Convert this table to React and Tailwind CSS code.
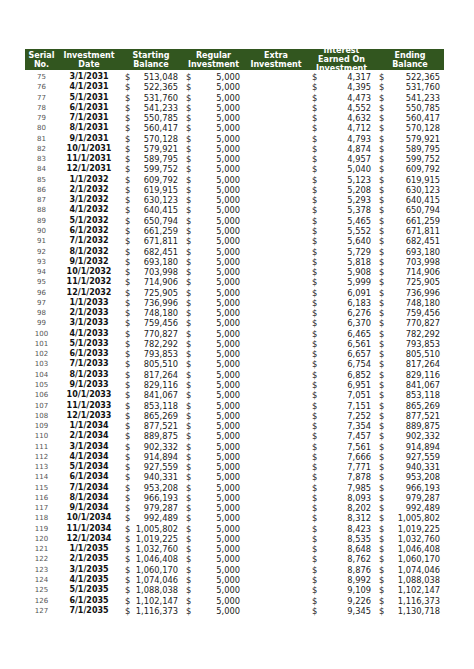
import React from "react";

const raw = `75|3/1/2031|513,048|4,317|522,365
76|4/1/2031|522,365|4,395|531,760
77|5/1/2031|531,760|4,473|541,233
78|6/1/2031|541,233|4,552|550,785
79|7/1/2031|550,785|4,632|560,417
80|8/1/2031|560,417|4,712|570,128
81|9/1/2031|570,128|4,793|579,921
82|10/1/2031|579,921|4,874|589,795
83|11/1/2031|589,795|4,957|599,752
84|12/1/2031|599,752|5,040|609,792
85|1/1/2032|609,792|5,123|619,915
86|2/1/2032|619,915|5,208|630,123
87|3/1/2032|630,123|5,293|640,415
88|4/1/2032|640,415|5,378|650,794
89|5/1/2032|650,794|5,465|661,259
90|6/1/2032|661,259|5,552|671,811
91|7/1/2032|671,811|5,640|682,451
92|8/1/2032|682,451|5,729|693,180
93|9/1/2032|693,180|5,818|703,998
94|10/1/2032|703,998|5,908|714,906
95|11/1/2032|714,906|5,999|725,905
96|12/1/2032|725,905|6,091|736,996
97|1/1/2033|736,996|6,183|748,180
98|2/1/2033|748,180|6,276|759,456
99|3/1/2033|759,456|6,370|770,827
100|4/1/2033|770,827|6,465|782,292
101|5/1/2033|782,292|6,561|793,853
102|6/1/2033|793,853|6,657|805,510
103|7/1/2033|805,510|6,754|817,264
104|8/1/2033|817,264|6,852|829,116
105|9/1/2033|829,116|6,951|841,067
106|10/1/2033|841,067|7,051|853,118
107|11/1/2033|853,118|7,151|865,269
108|12/1/2033|865,269|7,252|877,521
109|1/1/2034|877,521|7,354|889,875
110|2/1/2034|889,875|7,457|902,332
111|3/1/2034|902,332|7,561|914,894
112|4/1/2034|914,894|7,666|927,559
113|5/1/2034|927,559|7,771|940,331
114|6/1/2034|940,331|7,878|953,208
115|7/1/2034|953,208|7,985|966,193
116|8/1/2034|966,193|8,093|979,287
117|9/1/2034|979,287|8,202|992,489
118|10/1/2034|992,489|8,312|1,005,802
119|11/1/2034|1,005,802|8,423|1,019,225
120|12/1/2034|1,019,225|8,535|1,032,760
121|1/1/2035|1,032,760|8,648|1,046,408
122|2/1/2035|1,046,408|8,762|1,060,170
123|3/1/2035|1,060,170|8,876|1,074,046
124|4/1/2035|1,074,046|8,992|1,088,038
125|5/1/2035|1,088,038|9,109|1,102,147
126|6/1/2035|1,102,147|9,226|1,116,373
127|7/1/2035|1,116,373|9,345|1,130,718`;

const rows = raw.split("\n").map((l) => l.split("|"));

const grid =
  "grid grid-cols-[33px_62px_62px_63px_62px_69px_68px] w-[419px]";

function Money({ v, cls }) {
  return (
    <div className={"flex justify-between " + cls}>
      <span>$</span>
      <span>{v}</span>
    </div>
  );
}

export default function App() {
  return (
    <div
      className="w-[474px] h-[669px] bg-white pt-[49px] pl-[25px]"
      style={{ fontFamily: '"DejaVu Sans", Verdana, sans-serif' }}
    >
      <div
        className={
          grid +
          " h-[21px] bg-[#32561f] text-white font-bold text-[8px] leading-[9px] text-center"
        }
      >
        <div className="flex items-center justify-center overflow-hidden">
          <span>Serial<br />No.</span>
        </div>
        <div className="flex items-center justify-center overflow-hidden">
          <span>Investment<br />Date</span>
        </div>
        <div className="flex items-center justify-center overflow-hidden">
          <span>Starting<br />Balance</span>
        </div>
        <div className="flex items-center justify-center overflow-hidden">
          <span>Regular<br />Investment</span>
        </div>
        <div className="flex items-center justify-center overflow-hidden">
          <span>Extra<br />Investment</span>
        </div>
        <div className="flex items-center justify-center overflow-hidden">
          <span className="shrink-0">Interest<br />Earned On<br />Investment</span>
        </div>
        <div className="flex items-center justify-center overflow-hidden">
          <span>Ending<br />Balance</span>
        </div>
      </div>
      <div className="mt-[2px] text-[8.3px] text-[#1c1c1c]">
        {rows.map((r) => (
          <div key={r[0]} className={grid + " h-[10.27px] leading-[10.27px]"}>
            <div className="text-center text-[7px] text-[#555]">{r[0]}</div>
            <div className="text-center font-bold text-[8px] text-[#111]">{r[1]}</div>
            <Money v={r[2]} cls="pl-[5px] pr-[4px]" />
            <Money v="5,000" cls="pl-[4px] pr-[5px]" />
            <div></div>
            <Money v={r[3]} cls="pl-[5px] pr-[5px]" />
            <Money v={r[4]} cls="pl-[3px] pr-[4px]" />
          </div>
        ))}
      </div>
    </div>
  );
}
